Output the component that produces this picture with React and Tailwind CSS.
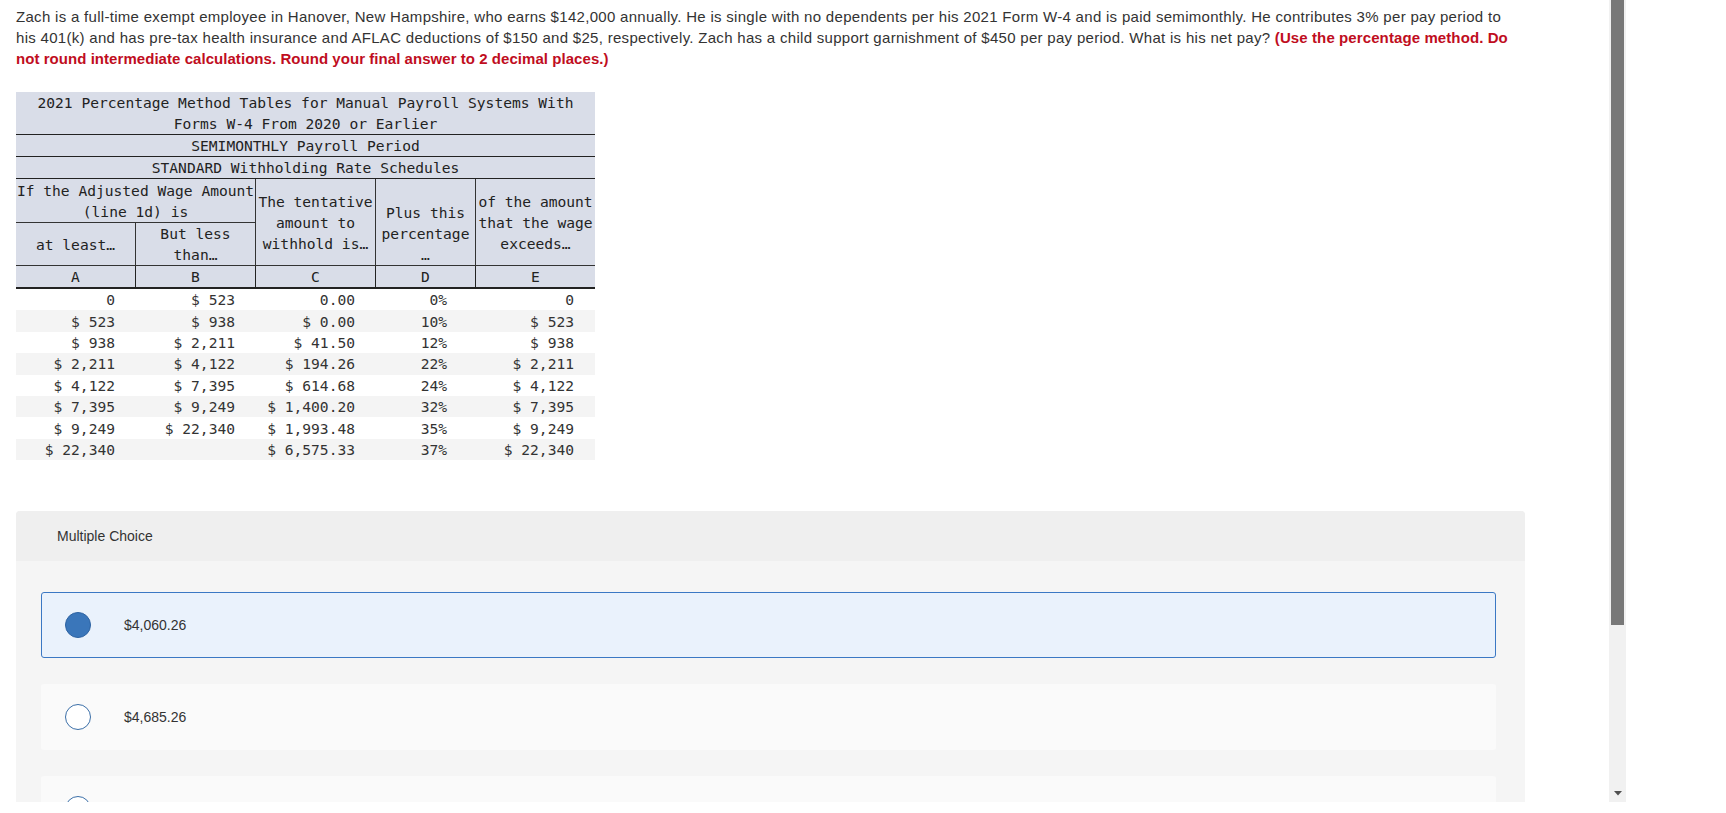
import React from "react";

const rows = [
  ["0", "$ 523", "0.00", "0%", "0"],
  ["$ 523", "$ 938", "$ 0.00", "10%", "$ 523"],
  ["$ 938", "$ 2,211", "$ 41.50", "12%", "$ 938"],
  ["$ 2,211", "$ 4,122", "$ 194.26", "22%", "$ 2,211"],
  ["$ 4,122", "$ 7,395", "$ 614.68", "24%", "$ 4,122"],
  ["$ 7,395", "$ 9,249", "$ 1,400.20", "32%", "$ 7,395"],
  ["$ 9,249", "$ 22,340", "$ 1,993.48", "35%", "$ 9,249"],
  ["$ 22,340", "", "$ 6,575.33", "37%", "$ 22,340"],
];

const choices = [
  { label: "$4,060.26", selected: true },
  { label: "$4,685.26", selected: false },
  { label: "$3,904.26", selected: false },
];

function Question() {
  return (
    <div className="text-[15px] leading-[21px] tracking-[0.3px] text-[#333]">
      <p className="whitespace-nowrap">
        Zach is a full-time exempt employee in Hanover, New Hampshire, who earns $142,000 annually. He is single with no dependents per his 2021 Form W-4 and is paid semimonthly. He contributes 3% per pay period to
      </p>
      <p className="whitespace-nowrap">
        his 401(k) and has pre-tax health insurance and AFLAC deductions of $150 and $25, respectively. Zach has a child support garnishment of $450 per pay period. What is his net pay?{" "}
        <b className="tracking-[0.1px] text-[#c00d1e]">(Use the percentage method. Do</b>
      </p>
      <p className="whitespace-nowrap font-bold tracking-[0.05px] text-[#c00d1e]">
        not round intermediate calculations. Round your final answer to 2 decimal places.)
      </p>
    </div>
  );
}

function RateTable() {
  return (
    <div className="mt-[23px] w-[579px] font-['DejaVu_Sans_Mono',monospace] text-[14.6px] leading-[21px] text-[#222]">
      {/* header block */}
      <div className="grid grid-cols-[120px_120px_120px_100px_119px] bg-[#d9dde8] text-center">
        <div className="col-span-5 h-[43px] border-b border-[#222] flex flex-col items-center justify-center whitespace-nowrap">
          <span>2021 Percentage Method Tables for Manual Payroll Systems With</span>
          <span>Forms W-4 From 2020 or Earlier</span>
        </div>
        <div className="col-span-5 h-[22px] border-b border-[#222] flex items-center justify-center">
          SEMIMONTHLY Payroll Period
        </div>
        <div className="col-span-5 h-[22px] border-b border-[#222] flex items-center justify-center">
          STANDARD Withholding Rate Schedules
        </div>

        <div className="col-span-2 h-[44px] border-b border-r border-[#333] flex flex-col items-center justify-center whitespace-nowrap">
          <span>If the Adjusted Wage Amount</span>
          <span>(line 1d) is</span>
        </div>
        <div className="row-span-2 border-b border-r border-[#333] flex flex-col items-center justify-center whitespace-nowrap">
          <span>The tentative</span>
          <span>amount to</span>
          <span>withhold is…</span>
        </div>
        <div className="row-span-2 border-b border-r border-[#333] flex flex-col items-center justify-end whitespace-nowrap">
          <span>Plus this</span>
          <span>percentage</span>
          <span>…</span>
        </div>
        <div className="row-span-2 border-b border-[#333] flex flex-col items-center justify-center whitespace-nowrap">
          <span>of the amount</span>
          <span>that the wage</span>
          <span>exceeds…</span>
        </div>
        <div className="h-[43px] border-b border-r border-[#333] flex items-center justify-center">
          at least…
        </div>
        <div className="h-[43px] border-b border-r border-[#333] flex flex-col items-center justify-center">
          <span>But less</span>
          <span>than…</span>
        </div>

        <div className="h-[23px] border-b-2 border-r border-[#222] flex items-center justify-center">A</div>
        <div className="h-[23px] border-b-2 border-r border-[#222] flex items-center justify-center">B</div>
        <div className="h-[23px] border-b-2 border-r border-[#222] flex items-center justify-center">C</div>
        <div className="h-[23px] border-b-2 border-r border-[#222] flex items-center justify-center">D</div>
        <div className="h-[23px] border-b-2 border-[#222] flex items-center justify-center">E</div>
      </div>

      {/* data rows */}
      {rows.map((r, i) => (
        <div
          key={i}
          className={`grid grid-cols-[120px_120px_120px_100px_119px] h-[21.4px] text-[#333] ${
            i % 2 === 1 ? "bg-[#f4f4f4]" : "bg-white"
          }`}
        >
          {r.map((c, j) => (
            <div
              key={j}
              className={`flex items-center justify-end whitespace-pre ${j === 3 ? "pr-[29px]" : "pr-[21px]"}`}
            >
              {c}
            </div>
          ))}
        </div>
      ))}
    </div>
  );
}

function Radio({ on }) {
  return on ? (
    <span className="w-[26px] h-[26px] shrink-0 rounded-full bg-[#3a76ba] border border-[#2c62a2]" />
  ) : (
    <span className="w-[26px] h-[26px] shrink-0 rounded-full bg-white border-[1.5px] border-[#3b6fa8]" />
  );
}

function MultipleChoice() {
  return (
    <div className="mt-[51px] w-[1509px] rounded-t-[4px] bg-[#f5f5f5] text-[14px] text-[#333]">
      <div className="h-[50px] rounded-t-[4px] bg-[#efefef] flex items-center pl-[41px]">Multiple Choice</div>
      <div className="pt-[31px] pl-[25px] pr-[29px] pb-[26px] flex flex-col gap-[26px]">
        {choices.map((c) => (
          <div
            key={c.label}
            className={
              c.selected
                ? "h-[66px] rounded-[3px] border border-[#3b78c4] bg-[#eaf2fc] flex items-center pl-[23px]"
                : "h-[66px] rounded-[3px] bg-[#fafafa] flex items-center pl-[24px]"
            }
          >
            <Radio on={c.selected} />
            <span className="ml-[33px]">{c.label}</span>
          </div>
        ))}
      </div>
    </div>
  );
}

function Scrollbar() {
  return (
    <div className="w-[17px] h-[802px] shrink-0 bg-[#f1f1f1] flex flex-col items-center">
      <div className="w-[13px] h-[625px] bg-[#787878]" />
      <div className="flex-1" />
      <div className="h-[17px] w-full flex items-center justify-center">
        <svg width="8" height="5" viewBox="0 0 8 5">
          <path d="M0 0 L8 0 L4 4.5 Z" fill="#505050" />
        </svg>
      </div>
    </div>
  );
}

export default function App() {
  return (
    <div className="w-[1726px] h-[813px] bg-white flex items-start overflow-hidden font-['Liberation_Sans',Arial,sans-serif]">
      <div className="w-[1609px] h-[802px] shrink-0 overflow-hidden">
        <div className="pl-[16px] pt-[6px]">
          <Question />
          <RateTable />
          <MultipleChoice />
        </div>
      </div>
      <Scrollbar />
    </div>
  );
}
